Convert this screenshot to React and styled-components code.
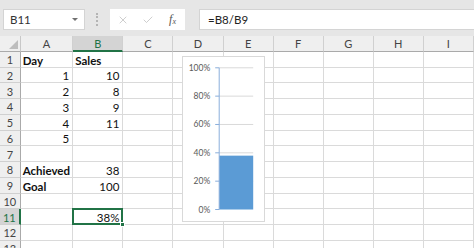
import React from 'react';
import styled, { createGlobalStyle, css } from 'styled-components';
import { X, Check } from 'lucide-react';

const GlobalStyle = createGlobalStyle`
  html, body { margin: 0; padding: 0; background: #fff; }
  body { font-family: Lato, "Liberation Sans", sans-serif; }
  #root { width: 474px; height: 248px; }
`;

const Window = styled.div`
  width: 474px;
  height: 248px;
  overflow: hidden;
  background: #fff;
  display: flex;
  flex-direction: column;
`;

const FormulaBar = styled.div`
  flex: none;
  height: 36px;
  box-sizing: border-box;
  background: #e6e6e6;
  display: flex;
  align-items: flex-start;
  padding: 9px 0 0 3px;
`;

const NameBox = styled.div`
  width: 82px;
  height: 21px;
  box-sizing: border-box;
  background: #fff;
  border: 1px solid #d4d4d4;
  display: flex;
  align-items: center;
  justify-content: space-between;
  padding: 0 6px 0 6px;
  font-size: 11.5px;
  color: #333;
`;

const DropArrow = styled.span`
  width: 0;
  height: 0;
  border-left: 3px solid transparent;
  border-right: 3px solid transparent;
  border-top: 3px solid #707070;
`;

const Grip = styled.div`
  width: 0;
  height: 13px;
  margin: 4px 0 0 11px;
  border-left: 2px dotted #b4b4b4;
`;

const ButtonBox = styled.div`
  width: 75px;
  height: 21px;
  margin-left: 12px;
  background: #fff;
  position: relative;
  display: flex;
  align-items: center;
`;

const BarButton = styled.span`
  width: 28px;
  display: flex;
  justify-content: center;
  align-items: center;
  color: ${p => p.$color || '#b4b4b4'};
`;

const Fx = styled.span`
  font-family: "Liberation Serif", serif;
  font-style: italic;
  font-size: 12px;
  color: #555;
  sub { font-size: 8px; vertical-align: -1px; }
`;

const FormulaInput = styled.div`
  flex: 1;
  height: 21px;
  margin-left: 14px;
  box-sizing: border-box;
  background: #fff;
  border: 1px solid #d4d4d4;
  border-right: none;
  display: flex;
  align-items: center;
  padding-left: 8px;
  font-size: 11.5px;
  color: #222;
`;

const Sheet = styled.div`
  position: relative;
  flex: none;
  display: grid;
  grid-template-columns: 20.7px 52.6px repeat(8, 50.09px);
  grid-auto-rows: 15.75px;
`;

const Corner = styled.div`
  background: #efefef;
  border-right: 1px solid #c8c8c8;
  border-bottom: 1px solid #aaaaaa;
  box-sizing: border-box;
  position: relative;
  &::after {
    content: '';
    position: absolute;
    right: 2px;
    bottom: 2px;
    width: 0;
    height: 0;
    border-left: 9px solid transparent;
    border-bottom: 9px solid #bdbdbd;
  }
`;

const ColHeader = styled.div`
  box-sizing: border-box;
  background: ${p => (p.$active ? '#d4d4d4' : '#efefef')};
  border-right: 1px solid #d0d0d0;
  border-bottom: ${p => (p.$active ? '2px solid #217346' : '1px solid #aaaaaa')};
  display: flex;
  align-items: center;
  justify-content: center;
  font-size: 11px;
  color: ${p => (p.$active ? '#217346' : '#444')};
  padding-top: ${p => (p.$active ? '1px' : '0')};
`;

const RowHeader = styled.div`
  box-sizing: border-box;
  background: ${p => (p.$active ? '#d4d4d4' : '#efefef')};
  border-right: ${p => (p.$active ? '2px solid #217346' : '1px solid #aaaaaa')};
  border-bottom: 1px solid #d0d0d0;
  display: flex;
  align-items: center;
  justify-content: center;
  padding-top: 1px;
  font-size: 11px;
  color: ${p => (p.$active ? '#217346' : '#444')};
`;

const Cell = styled.div`
  box-sizing: border-box;
  border-right: 1px solid #dadada;
  border-bottom: 1px solid #dadada;
  display: flex;
  align-items: center;
  padding: 2px 3px 0 2px;
  font-size: 11.5px;
  color: #111;
  white-space: nowrap;
  justify-content: ${p => (p.$num ? 'flex-end' : 'flex-start')};
  font-weight: ${p => (p.$bold ? 700 : 400)};
  position: relative;
  ${p =>
    p.$selected &&
    css`
      &::after {
        content: '';
        position: absolute;
        left: -1px;
        top: -1px;
        right: -1px;
        bottom: -1px;
        border: 2px solid #217346;
      }
      &::before {
        content: '';
        position: absolute;
        right: -3px;
        bottom: -3px;
        width: 5px;
        height: 5px;
        background: #217346;
        border: 1px solid #fff;
        box-sizing: border-box;
        z-index: 2;
      }
    `}
`;

const ChartBox = styled.div`
  position: absolute;
  left: 181.7px;
  top: 20px;
  width: 83.5px;
  height: 166px;
  box-sizing: border-box;
  background: #fff;
  border: 1px solid #d9d9d9;
`;

const cols = ['A', 'B', 'C', 'D', 'E', 'F', 'G', 'H', 'I'];

const rows = [
  [{ v: 'Day', b: true }, { v: 'Sales', b: true }],
  [{ v: '1', n: true }, { v: '10', n: true }],
  [{ v: '2', n: true }, { v: '8', n: true }],
  [{ v: '3', n: true }, { v: '9', n: true }],
  [{ v: '4', n: true }, { v: '11', n: true }],
  [{ v: '5', n: true }, {}],
  [{}, {}],
  [{ v: 'Achieved', b: true }, { v: '38', n: true }],
  [{ v: 'Goal', b: true }, { v: '100', n: true }],
  [{}, {}],
  [{}, { v: '38%', n: true, s: true }],
  [{}, {}],
  [{}, {}],
];

function Chart() {
  const axisX = 36.2;
  const top = 10.8;
  const bottom = 152.5;
  const right = 70.2;
  const h = bottom - top;
  const ticks = [0, 20, 40, 60, 80, 100];
  const barTop = bottom - h * 0.38;
  return (
    <svg width="82" height="164" viewBox="0 0 82 164">
      {ticks.map(t => {
        const y = bottom - (h * t) / 100;
        return (
          <g key={t}>
            {t > 0 && <line x1={axisX} x2={right} y1={y} y2={y} stroke="#d9d9d9" strokeWidth="1" />}
            <line x1={axisX - 4} x2={axisX} y1={y} y2={y} stroke="#8aaedb" strokeWidth="1" />
            <text
              x="27.3"
              y={y + 3}
              textAnchor="end"
              fontSize="8.5"
              fill="#595959"
              fontFamily="Lato, 'Liberation Sans', sans-serif"
            >
              {t}%
            </text>
          </g>
        );
      })}
      <rect x={axisX} y={barTop} width={right - axisX} height={bottom - barTop} fill="#5b9bd5" />
      <line x1={axisX} x2={axisX} y1={top} y2={bottom} stroke="#8aaedb" strokeWidth="1" />
    </svg>
  );
}

export default function App() {
  return (
    <Window>
      <GlobalStyle />
      <FormulaBar>
        <NameBox>
          <span>B11</span>
          <DropArrow />
        </NameBox>
        <Grip />
        <ButtonBox>
          <BarButton>
            <X size={12} strokeWidth={1.3} />
          </BarButton>
          <BarButton>
            <Check size={12} strokeWidth={1.3} />
          </BarButton>
          <BarButton $color="#555">
            <Fx>
              f<sub>x</sub>
            </Fx>
          </BarButton>
        </ButtonBox>
        <FormulaInput>=B8/B9</FormulaInput>
      </FormulaBar>
      <Sheet>
        <Corner />
        {cols.map(c => (
          <ColHeader key={c} $active={c === 'B'}>
            {c}
          </ColHeader>
        ))}
        {rows.map((r, i) => (
          <React.Fragment key={i}>
            <RowHeader $active={i === 10}>{i + 1}</RowHeader>
            {cols.map((c, j) => {
              const d = r[j] || {};
              return (
                <Cell key={c} $num={d.n} $bold={d.b} $selected={d.s}>
                  {d.v}
                </Cell>
              );
            })}
          </React.Fragment>
        ))}
        <ChartBox>
          <Chart />
        </ChartBox>
      </Sheet>
    </Window>
  );
}
